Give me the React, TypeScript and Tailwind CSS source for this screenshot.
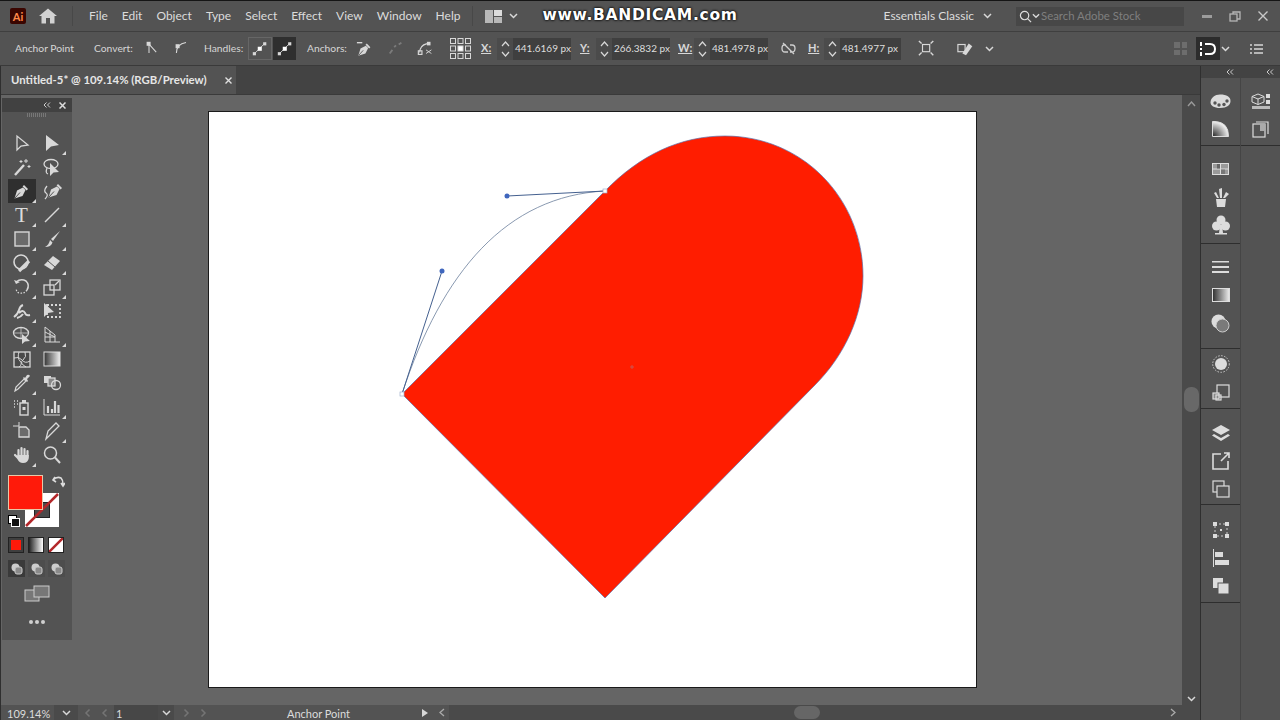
import React from "react";

const C = "#d8d8d8";
const S = ({ children, w = 20, h = 20, vb = "0 0 20 20", className = "" }: { children: React.ReactNode; w?: number; h?: number; vb?: string; className?: string }) => (
  <svg width={w} height={h} viewBox={vb} fill="none" stroke={C} strokeWidth={1.3} className={"block shrink-0 " + className}>{children}</svg>
);
const Nib = () => (
  <>
    <path d="M2.5 17.5 L5 9.5 L11 6.5 L13.5 9 L10.5 15 Z" fill={C} stroke="none" />
    <path d="M12 4 L16 8 L14.6 9.4 L10.6 5.4Z" fill={C} stroke="none" />
    <path d="M3 17 L8 11.5" stroke="#444" strokeWidth={0.9} />
  </>
);
const Chev = ({ className = "" }: { className?: string }) => (
  <svg width="9" height="6" viewBox="0 0 9 6" fill="none" stroke="#d8d8d8" strokeWidth={1.5} className={"block shrink-0 " + className}><path d="M1 1 L4.5 4.5 L8 1" /></svg>
);
const Spin = () => (
  <div className="w-[16px] h-[22px] flex flex-col items-center justify-center gap-[4px] bg-[#4b4b4b]">
    <svg width="9" height="6" viewBox="0 0 9 6" fill="none" stroke="#d8d8d8" strokeWidth={1.2}><path d="M1 5 L4.5 1 L8 5" /></svg>
    <svg width="9" height="6" viewBox="0 0 9 6" fill="none" stroke="#d8d8d8" strokeWidth={1.2}><path d="M1 1 L4.5 5 L8 1" /></svg>
  </div>
);
const Field = ({ label, value, ml, w = "w-[58px]" }: { label: string; value: string; ml: string; w?: string }) => (
  <div className={"flex items-center " + ml}>
    <span className="font-bold underline text-[11px] text-[#d8d8d8] w-[16px]">{label}</span>
    <Spin />
    <div className={"h-[22px] bg-[#3f3f3f] text-[10px] text-[#dedede] flex items-center pl-[2px] whitespace-nowrap " + w}>{value}</div>
  </div>
);
const HandleIcon = () => (
  <S w={18} h={18}>
    <path d="M3 16 L16 3" strokeWidth={1} />
    <rect x="7.5" y="7.5" width="4.5" height="4.5" fill="#fff" stroke="none" />
    <rect x="2" y="13.5" width="3.5" height="3.5" fill={C} stroke="none" />
    <rect x="13.5" y="2.5" width="3.5" height="3.5" fill={C} stroke="none" />
  </S>
);

const Corner = () => <span className="absolute right-0 bottom-0 w-0 h-0 border-l-[4px] border-l-transparent border-b-[4px] border-b-[#d8d8d8]" />;

const tools: { i: React.ReactNode; c?: boolean; active?: boolean }[] = [
  { i: <S><path d="M5 3 L5 17 L9 13 L16 12 Z" /></S> },
  { i: <S><path d="M4 2 L4 18 L9 13.5 L17 12 Z" fill={C} stroke="none" /></S>, c: true },
  { i: <S><path d="M3 18 L12 8" strokeWidth={2.4} /><path d="M14 2 V6 M12 4 H16 M17 8 V11 M15.5 9.5 H18.5 M9 3 V6 M7.5 4.5 H10.5" strokeWidth={1} /></S> },
  { i: <S><ellipse cx="9" cy="7" rx="7" ry="4.5" /><path d="M5 11 Q3 16 6 17" /><path d="M8 6 L8 19 L11.5 15.5 L17 15 Z" fill={C} stroke="none" /></S> },
  { i: <S><Nib /></S>, active: true, c: true },
  { i: <S><g transform="translate(4 -1)"><Nib /></g><path d="M5 5 Q1 10 4 12 Q7 14 3 18" /></S> },
  { i: <span className="text-[21px] leading-none text-[#dcdcdc] [font-family:'Liberation_Serif',serif]">T</span>, c: true },
  { i: <S><path d="M3 17 L17 3" strokeWidth={1.4} /></S>, c: true },
  { i: <S><rect x="3" y="3" width="14" height="14" fill="#6a6a6a" strokeWidth={1.4} /></S>, c: true },
  { i: <S><path d="M18 2 L9 10 L11 12 Z" fill={C} stroke="none" /><path d="M8 11 L10.5 13.5 Q9 18 3 18 Q7 16 8 11Z" fill={C} stroke="none" /></S>, c: true },
  { i: <S><circle cx="9" cy="9" r="7" strokeWidth={1.6} /><path d="M7 18 L17 8" stroke={C} strokeWidth={3.2} /></S>, c: true },
  { i: <S><path d="M2 12 L11 3 L18 8 L10 17 Z" fill={C} stroke="none" /><path d="M6 8 L13 14" stroke="#555" strokeWidth={1} /></S>, c: true },
  { i: <S><path d="M4 5 Q9 1 14 4 Q18 8 15 13" strokeWidth={1.5} /><path d="M15 13 Q12 17 8 16 Q5 16 4 12" strokeDasharray="1.5 1.5" /><path d="M2 3 L4 7 L8 5" fill={C} stroke="none" /></S>, c: true },
  { i: <S><rect x="8" y="3" width="10" height="10" /><rect x="2" y="8" width="10" height="10" /><path d="M13 8 L17 4" /></S>, c: true },
  { i: <S><path d="M2 16 Q6 13 7 9 Q8 5 11 4 M7 12 Q11 8 13 12 Q14 15 18 14 M5 17 Q9 16 11 13" strokeWidth={2} /></S>, c: true },
  { i: <S><rect x="5" y="4" width="13" height="12" strokeDasharray="2 2" strokeWidth={1.8} /><path d="M2 2 L2 16 L6 12 L12 11Z" fill={C} stroke="none" /></S> },
  { i: <S><ellipse cx="9" cy="8" rx="7.5" ry="5.5" /><path d="M9 3 V13 M2 8 H16" strokeWidth={0.7} /><path d="M10 9 L10 19 L13 16.5 L18 16 Z" fill={C} stroke="none" /></S>, c: true },
  { i: <S><path d="M3 2 V17 H18 M3 2 L13 10 V17 M3 7 L13 12 M8 6 V17 M3 12 H13" strokeWidth={1} /></S>, c: true },
  { i: <S><rect x="2" y="3" width="16" height="15" fill="#4a4a4a" /><path d="M2 9 Q7 7 10 11 T18 12 M7 3 Q5 9 8 12 T7 18 M13 3 Q15 8 11 11 T14 18" strokeWidth={1} /></S> },
  { i: <svg width="20" height="20" viewBox="0 0 20 20" className="block"><defs><linearGradient id="g1"><stop offset="0" stopColor="#333" /><stop offset="1" stopColor="#eee" /></linearGradient></defs><rect x="2" y="3" width="16" height="14" fill="url(#g1)" stroke="#ddd" /></svg> },
  { i: <S><path d="M3 18 L4 14 L12 6 L14 8 L6 16 Z" strokeWidth={1.2} /><path d="M11 5 L15 9 L16 8 L15 6 L18 3 Q17 1 15 2 L13 5 L12 4Z" fill={C} stroke="none" /></S>, c: true },
  { i: <S><rect x="2" y="3" width="7" height="7" fill={C} stroke="none" /><rect x="6" y="5" width="7" height="8" fill="#888" /><circle cx="14" cy="12" r="4.5" /></S> },
  { i: <S><rect x="8" y="6" width="8" height="12" strokeWidth={1.4} /><rect x="10" y="3" width="4" height="3" fill={C} stroke="none" /><rect x="10.5" y="10" width="3" height="3" fill={C} stroke="none" /><path d="M2 4 h1 M5 4 h1 M2 7 h1 M5 7 h1 M2 10 h1" strokeWidth={1.4} /></S>, c: true },
  { i: <S><path d="M2 2 V18 H18" strokeWidth={1} /><path d="M6 9 V16 M10 12 V16 M13 4 V16 M16.5 8 V16" strokeWidth={2.2} /></S>, c: true },
  { i: <S><path d="M7 1 V5 M1 5 H7" strokeWidth={1} /><path d="M7 6 H14 L17 9 V16 H7 Z" fill="#6b6b6b" /></S> },
  { i: <S><path d="M4 18 L6 10 L14 2 L17 5 L9 13 Z" /><path d="M4 18 L11 11" strokeWidth={0.9} /></S>, c: true },
  { i: <S><path d="M6.5 11 V5 M9.5 10 V3 M12.5 10 V4 M15.5 11 V6 M7 14 L3 10" strokeWidth={2.2} strokeLinecap="round" /><path d="M5.5 10 H16.8 V13 Q16 18 11 18 Q7 18 5.5 14 Z" fill={C} stroke="none" /></S>, c: true },
  { i: <S><circle cx="8.5" cy="8" r="6" strokeWidth={1.5} /><path d="M13 12.5 L18 18" strokeWidth={2} /></S> },
];

const DM = ({ active }: { active?: boolean }) => (
  <div className={"w-[17px] h-[17px] flex items-center justify-center " + (active ? "bg-[#3a3a3a]" : "bg-[#4d4d4d]")}>
    <svg width="13" height="13" viewBox="0 0 13 13"><circle cx="5.5" cy="5.5" r="4" fill="#ccc" /><rect x="5" y="5" width="7" height="7" rx="2" fill="#8a8a8a" stroke="#ccc" /></svg>
  </div>
);

const ToolPanel = () => (
  <div className="absolute left-[1px] top-[3px] w-[70px] h-[542px] bg-[#535353] flex flex-col items-center">
    <div className="w-full h-[14px] bg-[#414141] flex items-center justify-end gap-[8px] pr-[6px] text-[#d8d8d8]">
      <svg width="8" height="6" viewBox="0 0 8 6" fill="none" stroke="#ccc"><path d="M3.5 0.5 L1 3 L3.5 5.5 M7 0.5 L4.5 3 L7 5.5" /></svg>
      <svg width="7" height="7" viewBox="0 0 7 7" fill="none" stroke="#ddd" strokeWidth={1.5}><path d="M0.5 0.5 L6.5 6.5 M6.5 0.5 L0.5 6.5" /></svg>
    </div>
    <div className="w-[20px] h-[4px] mt-[1px] mb-[14px] bg-[repeating-linear-gradient(90deg,#777_0,#777_1px,transparent_1px,transparent_2px)]" />
    <div className="grid grid-cols-[28px_28px] gap-x-[2px] auto-rows-[24px] justify-center -ml-[1px]">
      {tools.map((t, k) => (
        <div key={k} className={"relative flex items-center justify-center h-[24px] " + (t.active ? "bg-[#2f2f2f]" : "")}>
          {t.i}
          {t.c && <Corner />}
        </div>
      ))}
    </div>
    <div className="relative w-[56px] h-[56px] mt-[8px] -ml-[14px] shrink-0">
      <div className="absolute left-[23px] top-[18px] w-[34px] h-[34px] bg-white flex items-center justify-center">
        <div className="w-[16px] h-[16px] bg-[#4a4a4a] border border-[#222]" />
        <svg width="34" height="34" viewBox="0 0 34 34" className="absolute inset-0"><path d="M1 33 L33 1" stroke="#b3272a" strokeWidth={2.5} /></svg>
      </div>
      <div className="absolute left-[6px] top-0 w-[35px] h-[35px] bg-[#ff1a0a] border border-[#e8c8a8]" />
      <svg width="13" height="13" viewBox="0 0 13 13" fill="none" stroke="#ddd" strokeWidth={1.6} className="absolute left-[50px] top-[0px]"><path d="M1 5 Q5 1 9 3 Q11 5 11 9 M3 2 L1 5 L4 7 M9 8 L11 11 L13 8" /></svg>
      <div className="absolute left-[6px] top-[40px] w-[9px] h-[9px] bg-white border border-black" />
      <div className="absolute left-[9px] top-[43px] w-[9px] h-[9px] bg-[#111] border border-white" />
    </div>
    <div className="flex items-center mt-[6px] -ml-[3px] gap-[4px]">
      <div className="w-[16px] h-[16px] border border-[#222] bg-[#3f3f3f] flex items-center justify-center"><div className="w-[10px] h-[10px] bg-[#ff1a0a]" /></div>
      <div className="w-[16px] h-[16px] border border-[#222] bg-[linear-gradient(90deg,#222,#fff)]" />
      <div className="w-[16px] h-[16px] border border-[#222] bg-white relative overflow-hidden">
        <svg width="14" height="14" viewBox="0 0 14 14" className="absolute inset-0"><path d="M0 14 L14 0" stroke="#b3272a" strokeWidth={2.5} /></svg>
      </div>
    </div>
    <div className="flex items-center mt-[7px] gap-[3px] -ml-[1px]"><DM active /><DM /><DM /></div>
    <svg width="26" height="20" viewBox="0 0 26 20" fill="#777" stroke="#ccc" className="mt-[7px] block"><rect x="1" y="6" width="14" height="11" /><rect x="10" y="2" width="15" height="11" /></svg>
    <div className="flex gap-[2px] mt-[16px]">
      <span className="w-[4px] h-[4px] rounded-full bg-[#d0d0d0]" /><span className="w-[4px] h-[4px] rounded-full bg-[#d0d0d0]" /><span className="w-[4px] h-[4px] rounded-full bg-[#d0d0d0]" />
    </div>
  </div>
);

const D = ({ children }: { children: React.ReactNode }) => <div className="h-[28px] flex items-center justify-center">{children}</div>;
const Grad = ({ id }: { id: string }) => (
  <svg width="18" height="14" viewBox="0 0 18 14" className="block"><defs><linearGradient id={id}><stop offset="0" stopColor="#2e2e2e" /><stop offset="1" stopColor="#eee" /></linearGradient></defs><rect x="0.5" y="0.5" width="17" height="13" fill={`url(#${id})`} stroke="#ddd" /></svg>
);
const Group = ({ h, children }: { h: string; children: React.ReactNode }) => (
  <div className={"border-b border-[#2e2e2e] flex flex-col " + h}>{children}</div>
);

const items = ["File", "Edit", "Object", "Type", "Select", "Effect", "View", "Window", "Help"];

export default function App() {
  return (
    <div className="w-[1280px] h-[720px] overflow-hidden flex flex-col bg-[#535353] text-[#d6d6d6] [font-family:'Lato',sans-serif]">
      {/* App bar */}
      <div className="h-[32px] shrink-0 flex items-center border-t border-[#151515] border-b-[#3f3f3f] border-b">
        <div className="ml-[10px] w-[16px] h-[16px] rounded-[2px] bg-[#3a0500] text-[#ff8a4a] text-[11px] font-bold flex items-center justify-center leading-none">Ai</div>
        <svg width="18" height="16" viewBox="0 0 18 16" className="ml-[13px] block"><path d="M9 0.5 L18 8 H15.5 V15.5 H11 V10 H7 V15.5 H2.5 V8 H0 Z" fill="#d2d2d2" /></svg>
        <div className="w-px h-[20px] bg-[#484848] ml-[15px]" />
        <div className="flex items-center text-[12px] text-[#dcdcdc] ml-[16px] gap-[14px]">
          {items.map((m) => <span key={m}>{m}</span>)}
        </div>
        <div className="w-px h-[20px] bg-[#484848] ml-[12px]" />
        <div className="ml-[12px] w-[17px] h-[13px] grid grid-cols-2 grid-rows-2 gap-[1px]">
          <span className="row-span-2 bg-[#b8b8b8]" /><span className="bg-[#dcdcdc]" /><span className="bg-[#b8b8b8]" />
        </div>
        <Chev className="ml-[7px]" />
        <span className="ml-[24px] text-[15.5px] font-bold text-white whitespace-nowrap tracking-[0.7px] [font-family:'DejaVu_Sans',sans-serif] [text-shadow:0_0_3px_#000,0_0_2px_#000]">www.BANDICAM.com</span>
        <div className="flex-1" />
        <span className="text-[12px] text-[#dcdcdc] whitespace-nowrap">Essentials Classic</span>
        <Chev className="ml-[9px]" />
        <div className="ml-[24px] w-[168px] h-[19px] bg-[#474747] flex items-center pl-[3px]">
          <svg width="13" height="13" viewBox="0 0 14 14" fill="none" stroke="#ddd" strokeWidth={1.3}><circle cx="6" cy="6" r="4.5" /><path d="M9 9 L13 13" /></svg>
          <svg width="8" height="6" viewBox="0 0 9 6" fill="none" stroke="#d8d8d8" strokeWidth={1.5}><path d="M1 1 L4.5 4.5 L8 1" /></svg>
          <span className="text-[11.4px] text-[#7f7f7f] ml-[1px]">Search Adobe Stock</span>
        </div>
        <div className="ml-[18px] w-[10px] h-[3px] bg-[#9c9c9c]" />
        <svg width="12" height="11" viewBox="0 0 12 11" fill="none" stroke="#b5b5b5" strokeWidth={1.3} className="ml-[17px]"><rect x="1" y="3" width="7" height="7" /><path d="M4 3 V1 H11 V8 H8" /></svg>
        <svg width="10" height="10" viewBox="0 0 10 10" fill="none" stroke="#c8c8c8" strokeWidth={1.4} className="ml-[17px] mr-[12px]"><path d="M0.5 0.5 L9.5 9.5 M9.5 0.5 L0.5 9.5" /></svg>
      </div>
      {/* Control bar */}
      <div className="h-[34px] shrink-0 flex items-center text-[10.3px] text-[#d6d6d6] whitespace-nowrap border-b border-[#3a3a3a]">
        <span className="ml-[15px] w-[57px]">Anchor Point</span>
        <span className="ml-[22px] w-[38px]">Convert:</span>
        <S w={16} h={16} className="ml-[13px]"><rect x="2" y="1" width="5" height="5" fill={C} stroke="none" /><path d="M5 4 V15 M5 4 L14 14" /></S>
        <S w={16} h={16} className="ml-[13px]"><path d="M3 15 Q3 4 15 2" /><rect x="2" y="4" width="5" height="5" fill={C} stroke="none" /></S>
        <span className="ml-[14px] w-[39px]">Handles:</span>
        <div className="ml-[5px] w-[24px] h-[23px] border border-[#666] flex items-center justify-center"><HandleIcon /></div>
        <div className="ml-[1px] w-[23px] h-[23px] bg-[#2f2f2f] flex items-center justify-center"><HandleIcon /></div>
        <span className="ml-[11px] w-[39px]">Anchors:</span>
        <S w={18} h={18} className="ml-[10px]"><Nib /><path d="M1 3 H7" strokeWidth={1.5} /></S>
        <S w={18} h={18} className="ml-[13px] opacity-30"><path d="M3 15 L6 11 M8 8 L10 6 M13 5 L16 3" strokeWidth={2} /></S>
        <S w={18} h={18} className="ml-[12px]"><path d="M3 14 Q3 6 11 4" /><rect x="1.5" y="12" width="4" height="4" /><rect x="11" y="2" width="4" height="4" fill={C} stroke="none" /><path d="M10 11 L16 15 M10 15 L16 11" strokeWidth={1} /></S>
        <svg width="21" height="21" viewBox="0 0 21 21" fill="none" stroke="#d8d8d8" className="ml-[15px] block">
          <rect x="0.5" y="0.5" width="5" height="5" /><rect x="8" y="0.5" width="5" height="5" /><rect x="15.5" y="0.5" width="5" height="5" />
          <rect x="0.5" y="8" width="5" height="5" /><rect x="8" y="8" width="5" height="5" fill="#fff" /><rect x="15.5" y="8" width="5" height="5" />
          <rect x="0.5" y="15.5" width="5" height="5" /><rect x="8" y="15.5" width="5" height="5" /><rect x="15.5" y="15.5" width="5" height="5" />
        </svg>
        <Field label="X:" value="441.6169 px" ml="ml-[10px]" />
        <Field label="Y:" value="266.3832 px" ml="ml-[9px]" />
        <Field label="W:" value="481.4978 px" ml="ml-[8px]" />
        <svg width="15" height="13" viewBox="0 0 15 13" fill="none" stroke="#d0d0d0" strokeWidth={1.3} className="ml-[13px] block"><path d="M5 3 H3 Q1 3 1 6.5 Q1 10 4 10 H7 M9 3 H11 Q14 3 14 6.5 Q14 10 11 10 H9 M2 1 L13 12" /></svg>
        <Field label="H:" value="481.4977 px" ml="ml-[12px]" w="w-[61px]" />
        <S w={18} h={18} className="ml-[17px]"><rect x="5" y="5" width="8" height="8" /><path d="M1 1 L4 4 M17 1 L14 4 M1 17 L4 14 M17 17 L14 14" strokeWidth={1.5} /></S>
        <S w={20} h={18} className="ml-[20px]"><rect x="1" y="5" width="8" height="8" /><path d="M6 15 L13 4 L17 7 L10 17 Z" fill={C} stroke="none" /></S>
        <Chev className="ml-[9px]" />
        <div className="flex-1" />
        <div className="w-[13px] h-[13px] grid grid-cols-2 gap-[2px]"><span className="bg-[#6d6d6d]" /><span className="bg-[#6d6d6d]" /><span className="bg-[#6d6d6d]" /><span className="bg-[#6d6d6d]" /></div>
        <div className="ml-[9px] w-[24px] h-[23px] bg-[#2c2c2c] flex items-center justify-center">
          <svg width="16" height="14" viewBox="0 0 16 14" fill="none" stroke="#fff" strokeWidth={2}><path d="M1 0 V4 M1 6 V8 M1 10 V14" /><path d="M5 2 H10 Q15 2 15 7 Q15 12 10 12 H5" /></svg>
        </div>
        <Chev className="ml-[1px]" />
        <svg width="13" height="10" viewBox="0 0 13 10" stroke="#d8d8d8" strokeWidth={1.4} fill="none" className="ml-[20px] mr-[17px] block"><path d="M0 1 H2 M0 5 H2 M0 9 H2 M4 1 H13 M4 5 H13 M4 9 H13" /></svg>
      </div>
      {/* Body */}
      <div className="flex-1 flex min-h-0">
        <div className="w-[1200px] flex flex-col min-w-0 border-l border-[#2f2f2f]">
          <div className="h-[29px] shrink-0 bg-[#434343] flex border-b border-[#3a3a3a]">
            <div className="w-[235px] bg-[#535353] flex items-center">
              <span className="ml-[10px] w-[214px] text-[11.4px] font-bold text-[#e6e6e6] whitespace-nowrap">Untitled-5* @ 109.14% (RGB/Preview)</span>
              <svg width="7" height="7" viewBox="0 0 7 7" fill="none" stroke="#e0e0e0" strokeWidth={1.4} className="block"><path d="M0.5 0.5 L6.5 6.5 M6.5 0.5 L0.5 6.5" /></svg>
            </div>
          </div>
          <div className="flex-1 flex min-h-0">
            <div className="relative flex-1 bg-[#656565] pl-[207px] pt-[16px]">
              <ToolPanel />
              <div className="relative w-[769px] h-[577px] bg-white border border-[#1a1a1a]">
                <svg width="769" height="577" viewBox="208 111 769 577" className="absolute -left-px -top-px block">
                  <path d="M605 191 C640 155 680 136 725 136 C802 136 863 198 863 276 C863 315 845 355 815 385 L605 598 L402 394 Z" fill="#ff1d00" stroke="#5b6fa8" strokeWidth={0.7} />
                  <path d="M402 394 C442 271 507 196 605 191" fill="none" stroke="#6b7f9c" strokeWidth={0.8} />
                  <path d="M402 394 L442 271 M605 191 L507 196" fill="none" stroke="#44608f" strokeWidth={1} />
                  <circle cx="442" cy="271" r="2.5" fill="#3f66bd" />
                  <circle cx="507" cy="196" r="2.5" fill="#3f66bd" />
                  <rect x="400" y="392" width="4" height="4" fill="#fff" stroke="#9fb0cc" strokeWidth={0.7} />
                  <rect x="603" y="189" width="4" height="4" fill="#fff" stroke="#9fb0cc" strokeWidth={0.7} />
                  <path d="M630 367 h4 M632 365 v4" stroke="#c06060" strokeWidth={0.8} />
                </svg>
              </div>
            </div>
            <div className="w-[18px] bg-[#4a4a4a] flex flex-col items-center pt-[6px] pb-[3px]">
              <svg width="9" height="6" viewBox="0 0 9 6" fill="none" stroke="#999" strokeWidth={1.4}><path d="M1 5 L4.5 1 L8 5" /></svg>
              <div className="w-[15px] h-[25px] rounded-[7px] bg-[#686868] mt-[280px]" />
              <div className="flex-1" />
              <Chev />
            </div>
          </div>
          <div className="h-[15px] shrink-0 flex items-center text-[11px] text-[#dcdcdc] whitespace-nowrap bg-[#535353]">
            <span className="ml-[6px] w-[47px] pt-[4px]">109.14%</span>
            <div className="w-[24px] h-full bg-[#4a4a4a] flex items-center justify-center"><Chev /></div>
            <div className="ml-[5px] flex items-center gap-[8px] opacity-25"><Chev className="rotate-90" /><Chev className="rotate-90" /></div>
            <div className="ml-[5px] w-[44px] bg-[#474747] h-full flex items-center pl-[2px] pt-[4px]">1</div>
            <div className="w-[16px] h-full bg-[#4a4a4a] flex items-center justify-center"><Chev /></div>
            <div className="ml-[8px] flex items-center gap-[8px] opacity-25"><Chev className="-rotate-90" /><Chev className="-rotate-90" /></div>
            <span className="ml-[79px] w-[135px] pt-[4px]">Anchor Point</span>
            <span className="w-0 h-0 border-y-[4px] border-y-transparent border-l-[6px] border-l-[#d8d8d8]" />
            <svg width="6" height="9" viewBox="0 0 6 9" fill="none" stroke="#aaa" strokeWidth={1.3} className="ml-[11px]"><path d="M5 1 L1 4.5 L5 8" /></svg>
            <div className="flex-1 h-full bg-[#4a4a4a] ml-[4px] flex items-center">
              <div className="ml-[345px] w-[26px] h-[13px] rounded-full bg-[#666]" />
              <div className="flex-1" />
              <svg width="6" height="9" viewBox="0 0 6 9" fill="none" stroke="#aaa" strokeWidth={1.3} className="mr-[24px]"><path d="M1 1 L5 4.5 L1 8" /></svg>
            </div>
          </div>
        </div>
        {/* Dock */}
        <div className="w-[80px] shrink-0 flex flex-col border-l border-[#2f2f2f]">
          <div className="h-[12px] bg-[#434343] flex items-center text-[#ccc] shrink-0">
            <div className="w-[39px] flex justify-end pr-[6px]"><svg width="8" height="6" viewBox="0 0 8 6" fill="none" stroke="#ccc"><path d="M3.5 0.5 L1 3 L3.5 5.5 M7 0.5 L4.5 3 L7 5.5" /></svg></div>
            <div className="flex-1 flex justify-end pr-[6px]"><svg width="8" height="6" viewBox="0 0 8 6" fill="none" stroke="#ccc"><path d="M3.5 0.5 L1 3 L3.5 5.5 M7 0.5 L4.5 3 L7 5.5" /></svg></div>
          </div>
          <div className="flex-1 flex min-h-0">
            <div className="w-[40px] flex flex-col border-r border-[#454545]">
              <Group h="h-[68px] pt-[9px]">
                <D><svg width="21" height="15" viewBox="0 0 21 15"><path d="M10 0.5 C17 0.5 20.5 3 20.5 7 C20.5 11 17 14 10 14 C4 14 0.5 11.5 0.5 8.5 C0.5 4 5 0.5 10 0.5Z" fill="#dcdcdc" /><circle cx="5" cy="9" r="1.7" fill="#555" /><circle cx="9" cy="11" r="1.7" fill="#555" /><circle cx="14" cy="10.5" r="1.7" fill="#555" /><circle cx="17" cy="7" r="1.7" fill="#555" /></svg></D>
                <D><svg width="17" height="16" viewBox="0 0 17 16" className="block"><defs><radialGradient id="rg" cx="0" cy="1" r="1"><stop offset="0" stopColor="#222" /><stop offset="1" stopColor="#eee" /></radialGradient></defs><path d="M0.5 0.5 H3 Q16.5 1 16.5 15.5 H0.5Z" fill="url(#rg)" stroke="#ddd" /></svg></D>
              </Group>
              <Group h="h-[98px] pt-[9px]">
                <D><svg width="17" height="12" viewBox="0 0 17 12"><rect x="0.5" y="0.5" width="16" height="11" fill="#9a9a9a" stroke="#ddd" /><path d="M8.5 0 V12 M0 6 H17" stroke="#ddd" /><rect x="5" y="1" width="3" height="4.5" fill="#666" /><rect x="9" y="6.5" width="4" height="4.5" fill="#777" /></svg></D>
                <D><svg width="16" height="21" viewBox="0 0 16 21" fill="#dcdcdc"><path d="M3 12 H13 L12 20 H4 Z" /><path d="M7 11 L6 2 L9 1 L9 11 M4 11 L1 6 L3 5 L6 11 M10 11 L13 5 L16 7 L12 11" /></svg></D>
                <D><svg width="18" height="20" viewBox="0 0 18 20" fill="#dcdcdc"><circle cx="9" cy="5" r="4.5" /><circle cx="4.5" cy="11" r="4.5" /><circle cx="13.5" cy="11" r="4.5" /><path d="M8 10 H10 L11 18 H15 V19.5 H3 V18 H7Z" /></svg></D>
              </Group>
              <Group h="h-[105px] pt-[9px]">
                <D><svg width="17" height="12" viewBox="0 0 17 12" fill="#dcdcdc"><rect y="0" width="17" height="1.5" /><rect y="5" width="17" height="2" /><rect y="10" width="17" height="2" /></svg></D>
                <D><Grad id="g2" /></D>
                <D><svg width="19" height="19" viewBox="0 0 19 19"><circle cx="7.5" cy="7.5" r="7" fill="#dcdcdc" /><circle cx="11.5" cy="11.5" r="6.5" fill="#7a7a7a" stroke="#ccc" /></svg></D>
              </Group>
              <Group h="h-[60px] pt-[1px]">
                <D><svg width="18" height="18" viewBox="0 0 18 18"><circle cx="9" cy="9" r="6" fill="#dcdcdc" /><circle cx="9" cy="9" r="8.3" fill="none" stroke="#ccc" strokeDasharray="1.5 1.5" /></svg></D>
                <D><svg width="18" height="17" viewBox="0 0 18 17" fill="none" stroke="#dcdcdc" strokeWidth={1.2}><rect x="5" y="1" width="12" height="12" /><rect x="1" y="9" width="6" height="6" fill="#888" /><rect x="4" y="11" width="5" height="5" /></svg></D>
              </Group>
              <Group h="h-[96px] pt-[10px]">
                <D><svg width="18" height="17" viewBox="0 0 18 17" fill="#dcdcdc"><path d="M9 0 L18 5 L9 10 L0 5Z" /><path d="M2 9 L9 13 L16 9 L18 10.5 L9 16 L0 10.5Z" /></svg></D>
                <D><svg width="18" height="18" viewBox="0 0 18 18" fill="none" stroke="#dcdcdc" strokeWidth={1.6}><path d="M9 2 H1 V17 H16 V9" /><path d="M9 9 L17 1 M12 1 H17 V6" /></svg></D>
                <D><svg width="18" height="18" viewBox="0 0 18 18" fill="none" stroke="#dcdcdc" strokeWidth={1.2}><rect x="1" y="1" width="11" height="11" /><rect x="5" y="6" width="12" height="11" fill="#555" /></svg></D>
              </Group>
              <Group h="h-[98px] pt-[11px]">
                <D><svg width="16" height="16" viewBox="0 0 16 16" fill="#dcdcdc"><path d="M2 2 H14 V14 H2Z" fill="none" stroke="#ccc" strokeDasharray="2 2" /><rect x="0" y="0" width="4" height="4" /><rect x="12" y="0" width="4" height="4" /><rect x="0" y="12" width="4" height="4" /><rect x="12" y="12" width="4" height="4" /><rect x="7" y="7" width="2" height="2" /></svg></D>
                <D><svg width="16" height="18" viewBox="0 0 16 18" fill="#dcdcdc"><rect x="0" y="0" width="1" height="18" /><rect x="2" y="3" width="8" height="5" /><rect x="2" y="11" width="14" height="5" /></svg></D>
                <D><svg width="16" height="16" viewBox="0 0 16 16"><rect x="0" y="0" width="10" height="10" fill="#dcdcdc" /><rect x="5" y="5" width="11" height="11" fill="#dcdcdc" stroke="#555" /></svg></D>
              </Group>
              <div className="flex-1" />
            </div>
            <div className="flex-1 flex flex-col">
              <Group h="h-[68px] pt-[9px]">
                <D><svg width="20" height="17" viewBox="0 0 20 17" fill="none" stroke="#dcdcdc"><path d="M7 1 L13 3.5 V9 L7 11.5 L1 9 V3.5Z M1 3.5 L7 6 L13 3.5 M7 6 V11.5" /><rect x="15" y="1" width="4" height="4" fill="#dcdcdc" stroke="none" /><rect x="15" y="7" width="4" height="4" fill="#dcdcdc" stroke="none" /><rect x="1" y="13" width="18" height="3" fill="#bbb" stroke="none" /></svg></D>
                <D><svg width="17" height="17" viewBox="0 0 17 17" fill="none" stroke="#dcdcdc" strokeWidth={1.2}><rect x="1" y="3" width="12" height="13" /><path d="M4 1 H16 V13" /><rect x="8" y="3" width="5" height="7" fill="#aaa" stroke="none" /></svg></D>
              </Group>
              <div className="flex-1" />
            </div>
          </div>
        </div>
      </div>
    </div>
  );
}
